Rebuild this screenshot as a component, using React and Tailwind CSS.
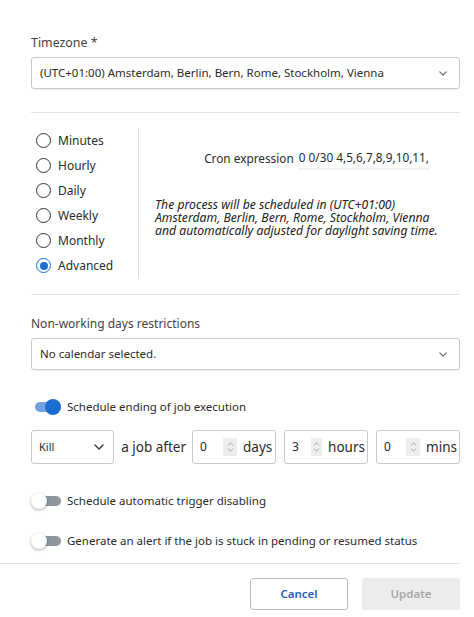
import React from 'react';

const Chevron = ({ className }) => (
  <svg viewBox="0 0 10 6" className={className} fill="none" stroke="currentColor" strokeWidth="1.4" strokeLinecap="round" strokeLinejoin="round">
    <path d="M1 1l4 4 4-4" />
  </svg>
);

const Radio = ({ label, checked }) => (
  <label className="flex h-[25px] items-center gap-[7px]">
    <span className={`flex h-[15px] w-[15px] items-center justify-center rounded-full border-[1.5px] ${checked ? 'border-[#1a6fd1]' : 'border-[#333]'}`}>
      {checked && <span className="h-[8px] w-[8px] rounded-full bg-[#1a6fd1]" />}
    </span>
    <span className="text-[12px]">{label}</span>
  </label>
);

const Toggle = ({ on, label }) => (
  <div className="flex h-[20px] items-center gap-[6px] whitespace-nowrap">
    <span className="relative block h-[16px] w-[30px] shrink-0">
      <span className={`absolute left-[4px] right-0 top-[3px] h-[10px] rounded-full ${on ? 'bg-[#72a2df]' : 'bg-[#8b969f]'}`} />
      <span className={`absolute top-0 h-[16px] w-[16px] rounded-full ${on ? 'right-0 bg-[#1c6dd0]' : 'left-0 bg-white shadow-[0_1px_3px_rgba(0,0,0,0.35)]'}`} />
    </span>
    <span>{label}</span>
  </div>
);

const Spinner = () => (
  <span className="flex h-[18px] w-[14px] flex-col items-center justify-center gap-[2px] bg-[#ededed] text-[#999]">
    <svg viewBox="0 0 8 4" className="h-[4px] w-[7px]" fill="none" stroke="currentColor" strokeWidth="1"><path d="M1 3.5L4 0.8 7 3.5" /></svg>
    <svg viewBox="0 0 8 4" className="h-[4px] w-[7px]" fill="none" stroke="currentColor" strokeWidth="1"><path d="M1 0.5L4 3.2 7 0.5" /></svg>
  </span>
);

const NumberField = ({ value, unit }) => (
  <div className="flex h-[34px] w-[84px] items-center rounded-[3px] border border-[#c9c9c9] pl-[7px] pr-[2px] whitespace-nowrap">
    <span className="w-[23px] text-[12px]">{value}</span>
    <Spinner />
    <span className="ml-[6px] text-[13.5px]">{unit}</span>
  </div>
);

export default function App() {
  return (
    <div className="w-[474px] bg-white pr-[14px] text-[11.5px] text-[#2b2b2b]" style={{ fontFamily: '"Noto Sans", "Open Sans", sans-serif' }}>
      <div className="pl-[31px] pt-[34px]">
        <div className="text-[12.4px] leading-[18px] text-[#444]">Timezone *</div>
        <div className="mt-[5px] flex h-[32px] items-center justify-between rounded-[3px] border border-[#c9c9c9] pl-[8px] pr-[12px] shadow-[0_1px_1px_rgba(0,0,0,0.06)]">
          <span>(UTC+01:00) Amsterdam, Berlin, Bern, Rome, Stockholm, Vienna</span>
          <Chevron className="h-[5px] w-[8px] text-[#666]" />
        </div>

        <div className="mt-[23px] border-t border-[#e2e2e2]" />

        <div className="flex pb-[16px] pt-[15px]">
          <div className="w-[107px] pl-[5px]">
            <Radio label="Minutes" />
            <Radio label="Hourly" />
            <Radio label="Daily" />
            <Radio label="Weekly" />
            <Radio label="Monthly" />
            <Radio label="Advanced" checked />
          </div>
          <div className="flex-1 border-l border-[#dcdcdc] pl-[16px]">
            <div className="mt-[21px] flex items-center justify-end gap-[4px] pr-[30px] text-[11.8px]">
              <span>Cron expression</span>
              <span className="border-b border-[#ececec] px-[1px] pb-[1px] shadow-[0_2px_2px_-1px_rgba(0,0,0,0.05)]">0 0/30 4,5,6,7,8,9,10,11,</span>
            </div>
            <p className="mt-[29px] w-[292px] text-[12.2px] italic leading-[13px] text-[#222]">
              The process will be scheduled in (UTC+01:00) Amsterdam, Berlin, Bern, Rome, Stockholm, Vienna and automatically adjusted for daylight saving time.
            </p>
          </div>
        </div>

        <div className="border-t border-[#e2e2e2]" />

        <div className="mt-[20px] text-[12px] leading-[18px] text-[#444]">Non-working days restrictions</div>
        <div className="mt-[5px] flex h-[32px] items-center justify-between rounded-[3px] border border-[#c9c9c9] pl-[8px] pr-[12px] shadow-[0_1px_1px_rgba(0,0,0,0.06)]">
          <span>No calendar selected.</span>
          <Chevron className="h-[5px] w-[8px] text-[#666]" />
        </div>

        <div className="mt-[27px]">
          <Toggle on label="Schedule ending of job execution" />
        </div>

        <div className="mt-[13px] flex items-center">
          <div className="flex h-[34px] w-[84px] items-center justify-between rounded-[3px] border border-[#c9c9c9] pl-[7px] pr-[9px]">
            <span className="text-[11px]">Kill</span>
            <Chevron className="h-[6px] w-[10px] text-[#333]" />
          </div>
          <span className="ml-[7px] mr-[6px] whitespace-nowrap text-[13.5px]">a job after</span>
          <div className="flex gap-[8px]">
            <NumberField value="0" unit="days" />
            <NumberField value="3" unit="hours" />
            <NumberField value="0" unit="mins" />
          </div>
        </div>

        <div className="mt-[27px]">
          <Toggle label="Schedule automatic trigger disabling" />
        </div>
        <div className="mt-[20px]">
          <Toggle label="Generate an alert if the job is stuck in pending or resumed status" />
        </div>
      </div>

      <div className="mt-[12px] border-t border-[#e2e2e2]" />

      <div className="flex justify-end gap-[14px] pb-[8px] pt-[14px]">
        <button className="h-[32px] w-[98px] rounded-[3px] border border-[#bdbdbd] bg-white text-[11.5px] font-semibold text-[#1f5fb8]">Cancel</button>
        <button className="h-[32px] w-[98px] rounded-[3px] bg-[#ececec] text-[11.5px] font-semibold text-[#a7a7a7]">Update</button>
      </div>
    </div>
  );
}
